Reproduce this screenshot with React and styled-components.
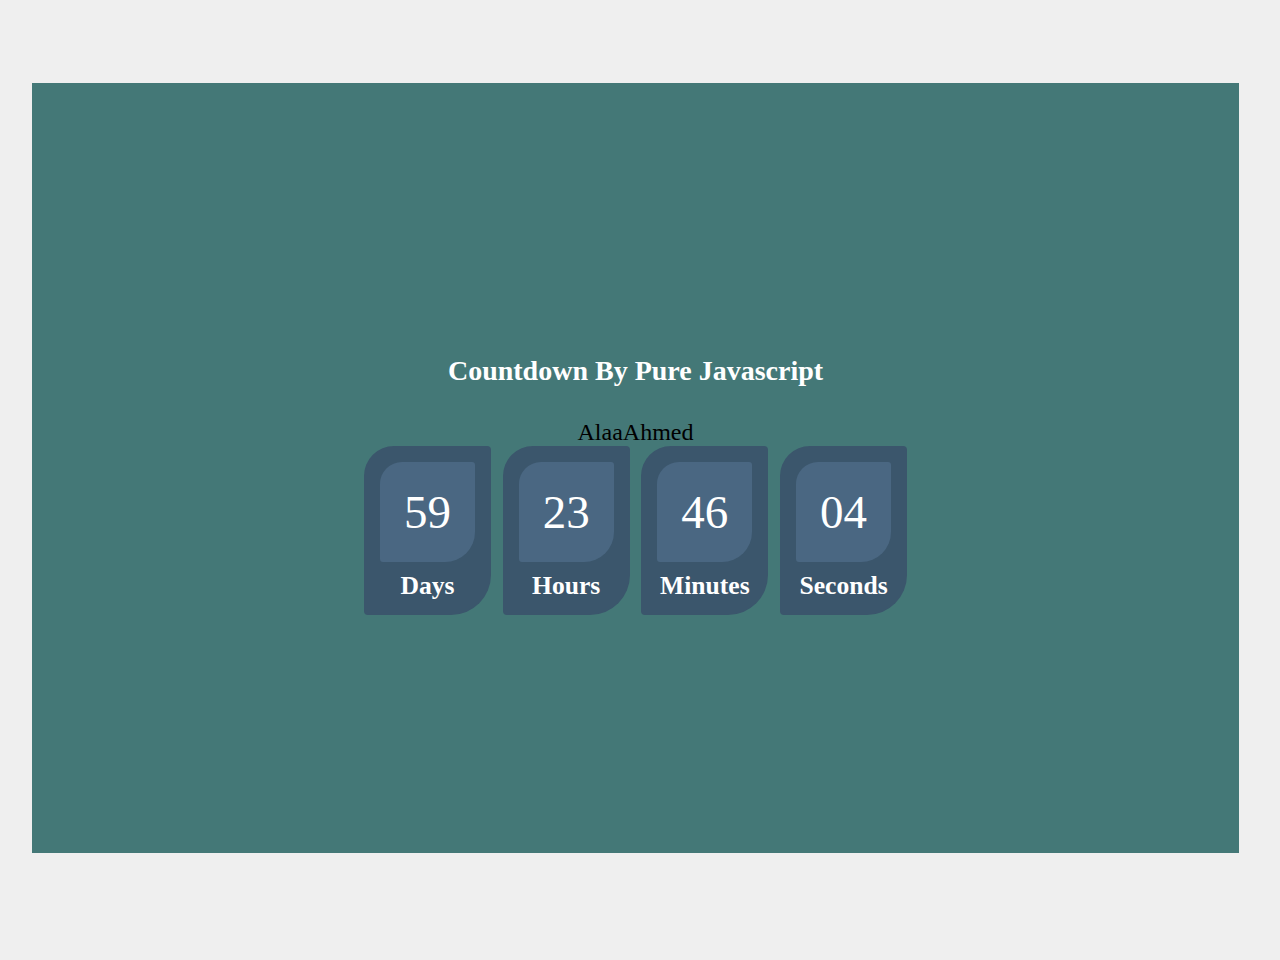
import React from 'react'
import styled, { createGlobalStyle } from 'styled-components'

const GlobalStyle = createGlobalStyle`
  html, body { margin: 0; padding: 0; background: #efefef; }
  body { font-family: "Liberation Serif", "Times New Roman", serif; }
`

const Page = styled.div`
  padding: 83px 41px 107px 32px;
`

const Panel = styled.div`
  height: 770px;
  background: #447877;
  display: flex;
  flex-direction: column;
  align-items: center;
  justify-content: center;
  padding-top: 34px;
  box-sizing: border-box;
`

const Title = styled.h1`
  margin: 0;
  color: #fff;
  font-size: 28px;
  line-height: 32px;
  font-weight: bold;
`

const Author = styled.div`
  margin-top: 32px;
  color: #000;
  font-size: 24px;
  line-height: 27px;
`

const Row = styled.div`
  display: flex;
  gap: 11.7px;
  margin-top: 0;
`

const Card = styled.div`
  width: 127px;
  box-sizing: border-box;
  padding: 16px 16px 15px 16px;
  background: #3b566c;
  border-radius: 30px 4px 40px 4px;
  display: flex;
  flex-direction: column;
  align-items: center;
`

const Value = styled.div`
  width: 95px;
  height: 100px;
  background: #4a6782;
  border-radius: 22px 3px 30px 3px;
  display: flex;
  align-items: center;
  justify-content: center;
  color: #fff;
  font-size: 47px;
`

const Label = styled.div`
  margin-top: 9px;
  color: #fff;
  font-size: 25.6px;
  line-height: 29px;
  font-weight: bold;
  white-space: nowrap;
`

const units = [
  { value: '59', label: 'Days' },
  { value: '23', label: 'Hours' },
  { value: '46', label: 'Minutes' },
  { value: '04', label: 'Seconds' },
]

const App = () => {
  return (
    <Page>
      <GlobalStyle />
      <Panel>
        <Title>Countdown By Pure Javascript</Title>
        <Author>AlaaAhmed</Author>
        <Row>
          {units.map(u => (
            <Card key={u.label}>
              <Value>{u.value}</Value>
              <Label>{u.label}</Label>
            </Card>
          ))}
        </Row>
      </Panel>
    </Page>
  )
}

export default App
